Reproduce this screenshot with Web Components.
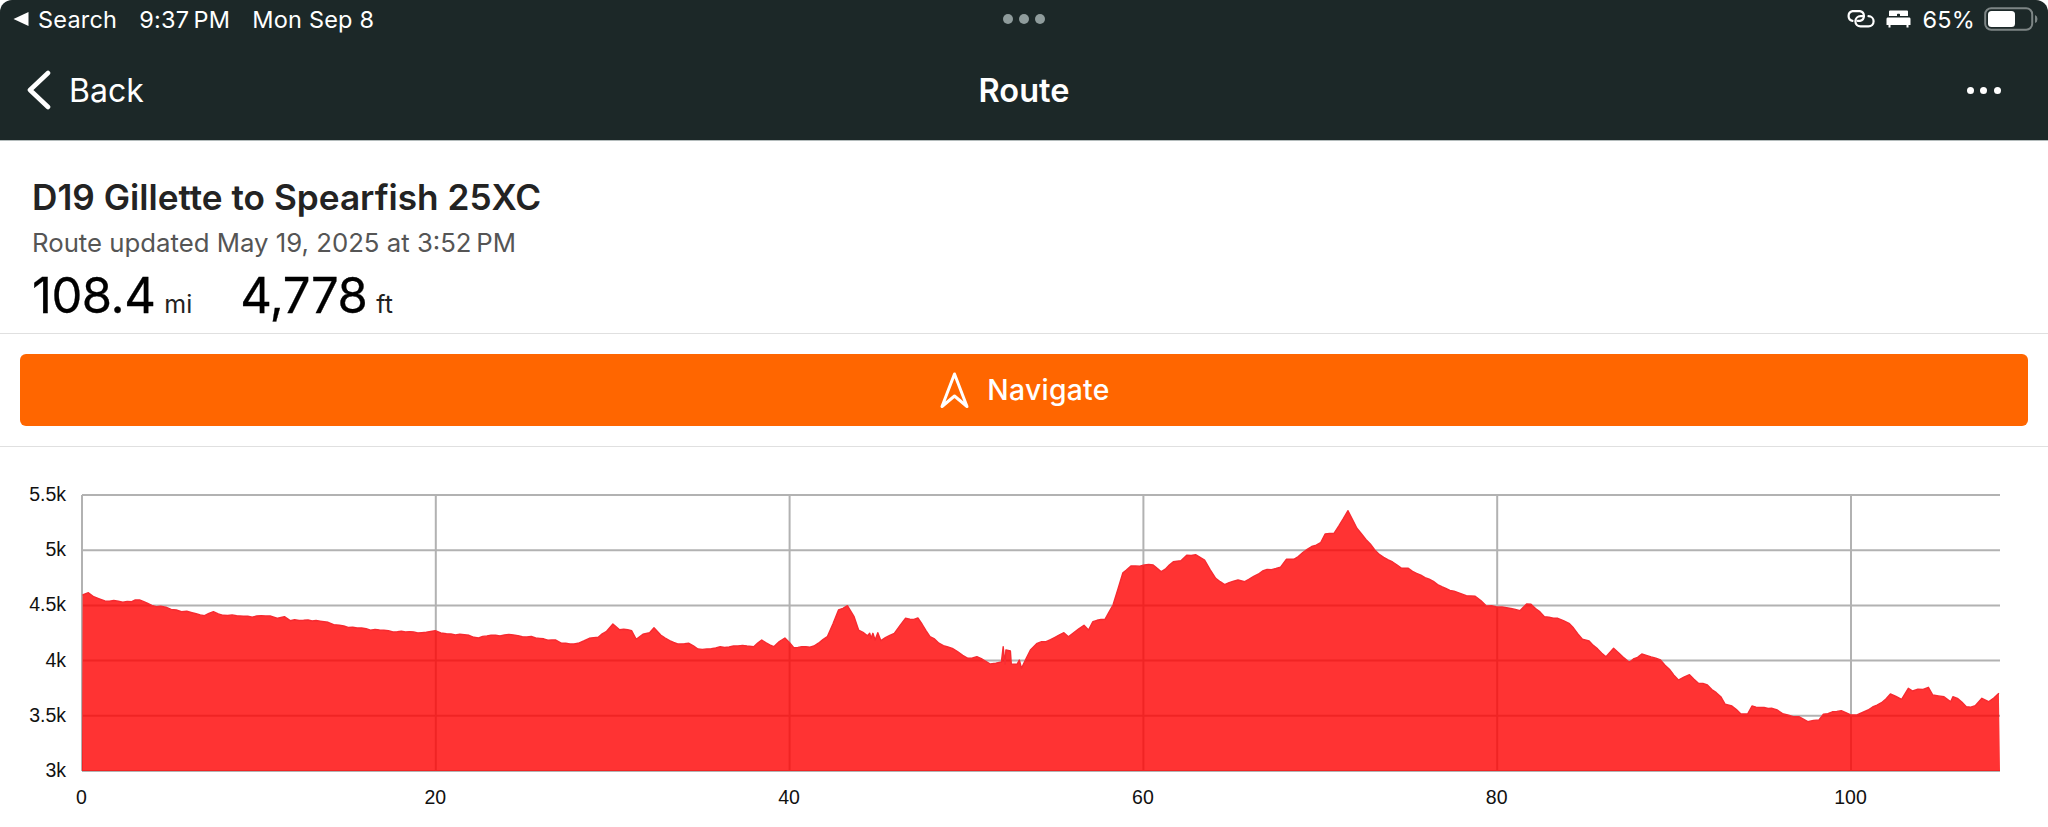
<!DOCTYPE html>
<html>
<head>
<meta charset="utf-8">
<title>Route</title>
<style>
html, body { margin: 0; padding: 0; background: #fff; height: 827px; overflow: hidden; }
body { font-family: Inter, "Noto Sans", sans-serif; }
</style>
</head>
<body>
<route-page></route-page>

<script>
// status bar + nav bar
class TopBar extends HTMLElement {
    constructor(){
        super();
        this.attachShadow({mode:"open"});
        this.shadowRoot.innerHTML = `
<style>
:host { display: block; background: #1c2828; color: #fff; height: 140px; border-bottom: 1px solid #b4bcbc; border-radius: 12px 12px 0 0; }
#status { height: 38px; display: flex; align-items: center; padding: 0 10px 0 13px; font-size: 23.5px; letter-spacing: .2px; position: relative; }
#status .left { display: flex; align-items: center; }
#status .right { margin-left: auto; display: flex; align-items: center; }
#search { margin-left: 9px; margin-right: 22px; }
#time { margin-right: 22px; }
#multi { position: absolute; left: 1003px; top: 14px; display: flex; gap: 6px; }
#multi i { width: 10px; height: 10px; border-radius: 50%; background: #8f9c9c; display: block; }
#pct { margin: 0 9px 0 11px; }
#nav { height: 100px; padding: 2px 47.5px 0 27px; display: flex; align-items: center; position: relative; }
#back { margin-left: 18px; font-size: 32px; }
#title { position: absolute; left: 0; right: 0; text-align: center; font-size: 32.5px; font-weight: 600; }
#more { margin-left: auto; display: flex; gap: 6.3px; }
#more i { width: 7px; height: 7px; border-radius: 50%; background: #fff; display: block; }
svg { display: block; }
</style>
<div id="status">
  <div class="left">
    <svg width="16" height="16" viewBox="0 0 16 16"><path d="M15.5 1 L15.5 15 L.5 8 Z" fill="#fff"/></svg>
    <span id="search">Search</span>
    <span id="time">9:37&#8201;PM</span>
    <span>Mon Sep 8</span>
  </div>
  <div id="multi"><i></i><i></i><i></i></div>
  <div class="right">
    <svg width="28" height="18" viewBox="0 0 28 18" fill="none" stroke="#fff" stroke-width="2.2" stroke-linecap="round">
      <path d="M5.5 10.8 A4.9 4.9 0 0 1 5.5 1.2 H13 A4.9 4.9 0 0 1 13 10.8 H10.5"/>
      <path d="M21.5 6.2 A5.1 5.1 0 0 1 21.5 16.4 H13.5 A5.1 5.1 0 0 1 13.5 6.2 H16.5"/>
    </svg>
    <svg style="margin-left:11px" width="25" height="18" viewBox="0 0 25 18" fill="#fff">
      <path d="M3 1.5 Q3 .5 4 .5 H21 Q22 .5 22 1.5 V6 H14 V4.5 Q14 3.8 13.2 3.8 H11.8 Q11 3.8 11 4.5 V6 H3 Z"/>
      <path d="M1.5 7.5 H23.5 Q24.5 7.5 24.5 9 V15 H22.5 V17.5 H20.5 V15 H4.5 V17.5 H2.5 V15 H.5 V9 Q.5 7.5 1.5 7.5 Z"/>
    </svg>
    <span id="pct">65%</span>
    <svg width="54" height="26" viewBox="0 0 54 26">
      <rect x="1.2" y="2.2" width="47" height="21.6" rx="6" fill="none" stroke="#7d8585" stroke-width="2"/>
      <rect x="4" y="5" width="27" height="16" rx="3.5" fill="#fff"/>
      <path d="M51 9 Q53.5 10 53.5 13 Q53.5 16 51 17 Z" fill="#7d8585"/>
    </svg>
  </div>
</div>
<div id="nav">
  <svg width="24" height="40" viewBox="0 0 24 40" fill="none" stroke="#fff" stroke-width="4.6" stroke-linecap="round" stroke-linejoin="round"><path d="M21 3 L3 20 L21 37"/></svg>
  <span id="back">Back</span>
  <span id="title">Route</span>
  <div id="more"><i></i><i></i><i></i></div>
</div>`;
    }
}

// name, date, distance and climb
class RouteSummary extends HTMLElement {
    constructor(){
        super();
        this.attachShadow({mode:"open"});
        this.shadowRoot.innerHTML = `
<style>
:host { display: block; height: 193px; padding: 0 32px; border-bottom: 1px solid #e0e0e0; box-sizing: border-box; }
h1 { margin: 0; padding-top: 35px; font-size: 35.2px; line-height: 42px; font-weight: 600; color: #232323; }
#updated { font-size: 25.75px; line-height: 30px; margin-top: 10px; color: #555; }
#stats { display: flex; align-items: baseline; margin-top: 10px; line-height: 56px; color: #000; }
b { font-weight: 400; font-size: 49px; letter-spacing: -.5px; -webkit-text-stroke: .3px #000; }
span { font-size: 25px; margin-left: 9px; margin-right: 48px; color: #222; }
</style>
<h1>D19 Gillette to Spearfish 25XC</h1>
<div id="updated">Route updated May 19, 2025 at 3:52&#8201;PM</div>
<div id="stats"><b>108.4</b><span>mi</span><b>4,778</b><span>ft</span></div>`;
    }
}

class NavigateButton extends HTMLElement {
    constructor(){
        super();
        this.attachShadow({mode:"open"});
        this.shadowRoot.innerHTML = `
<style>
:host { display: block; padding: 20px 20px 20px; border-bottom: 1px solid #e0e0e0; }
button { display: flex; align-items: center; justify-content: center; width: 100%; height: 72px; border: none; border-radius: 6px; background: #ff6600; color: #fff; font: 500 28.3px Inter, sans-serif; letter-spacing: .3px; padding: 0; }
svg { margin-right: 18px; margin-left: 2px; }
</style>
<button>
  <svg width="29" height="37" viewBox="0 0 29 37" fill="none" stroke="#fff" stroke-width="3" stroke-linejoin="round" stroke-linecap="round"><path d="M14.5 2 L27 34.5 L14.5 24 L2 34.5 Z"/></svg>
  <slot></slot>
</button>`;
    }
}

// elevation profile, points are traced in page pixels
var LEFT = 82, RIGHT = 2000, TOP = 495, BOTTOM = 771;
function zoomed(dx, list){
    var out = [];
    for (var i = 0; i < list.length; i += 2) out.push([dx + list[i]/2.24, 480 + list[i+1]/3]);
    return out;
}
var trace = [].concat(
    zoomed(0, [185,345,198,338,210,350,235,363,295,365,303,360,322,365,340,376,360,379,395,390,430,398,458,407,478,395,500,406,530,407,545,409,605,408,622,415,637,410,650,422,690,420,735,427,760,436,800,444,850,450,890,455,945,458,975,452,1000,461,1040,464,1072,474,1100,466,1150,465,1200,474,1245,480,1258,490,1295,490,1320,475,1340,472,1358,455,1373,432,1388,449,1415,452,1425,478,1440,463,1455,458,1465,443,1480,465,1500,482,1518,492]),
    zoomed(680, [0,492,20,490,40,507,70,506,120,498,150,498,165,500,183,480,210,500,235,474,255,503,300,498,330,470,355,390,375,377,390,410,400,450,420,467,425,460,428,475,432,460,437,480,443,458,450,482,480,460,505,415,515,418,533,414,560,470,590,497,610,505,645,535,665,530,695,552,720,546,724,500,728,552,730,510,740,513,742,552,755,553,760,540,765,565,785,510,800,490,820,485,860,458,870,470,905,436,915,450,925,425,952,418,970,375,992,278,1000,270,1010,258,1060,255,1078,275,1105,245,1122,242,1135,226,1155,224,1175,240,1200,295,1220,314,1250,300,1265,305,1305,273,1345,262,1358,238,1375,238,1405,208,1435,188,1445,162,1465,160]),
    zoomed(1348, [0,92,20,145,60,210,80,232,110,255,120,265,135,265,210,320,265,347,285,349,310,378,345,381,385,392,400,372,410,373,440,410,470,415,495,430,525,478,540,483,578,530,595,505,630,547,658,522,700,540,740,600,765,584,785,610,805,615,835,650,845,673,860,678,880,702,895,702,905,678,950,685,985,705,1010,710,1030,725,1055,720,1065,703,1105,692,1125,704,1140,705,1165,690,1195,668,1215,642,1240,658,1255,625,1265,633,1300,622,1310,645,1335,650,1350,665,1355,650,1365,655,1385,680,1405,677,1420,655,1435,665,1458,640])
);

// the real profile is ragged, so break long segments up with a little fixed noise
function ragged(points){
    var out = [];
    for (var i = 0; i < points.length - 1; i++){
        var a = points[i], b = points[i+1];
        var n = Math.floor((b[0]-a[0]) / 4);
        out.push(a);
        for (var k = 1; k < n; k++){
            var t = k/n, x = a[0] + (b[0]-a[0])*t, y = a[1] + (b[1]-a[1])*t;
            out.push([x, y + Math.sin(x*1.7)*0.5 + Math.sin(x*0.53)*0.4]);
        }
    }
    out.push(points[points.length-1]);
    return out;
}

class ElevationChart extends HTMLElement {
    constructor(){
        super();
        this.attachShadow({mode:"open"});
    }

    connectedCallback(){
        var hLines = "", vLines = "", labels = "";
        var yNames = ["5.5k","5k","4.5k","4k","3.5k","3k"];
        for (var i = 0; i < 6; i++){
            var y = TOP + i*(BOTTOM-TOP)/5;
            hLines += `<line x1="${LEFT}" x2="${RIGHT}" y1="${y}" y2="${y}"/>`;
            labels += `<text x="66" y="${y+6}" text-anchor="end">${yNames[i]}</text>`;
        }
        for (var j = 0; j < 6; j++){
            var x = LEFT + j*353.8;
            vLines += `<line x1="${x}" x2="${x}" y1="${TOP}" y2="${BOTTOM}"/>`;
            labels += `<text x="${x-0.5}" y="804" text-anchor="middle">${j*20}</text>`;
        }
        var line = ragged(trace).map(p => p[0].toFixed(1)+","+p[1].toFixed(1)).join(" L");
        this.shadowRoot.innerHTML = `
<style>
:host { display: block; height: 380px; }
svg { display: block; }
.grid line { stroke: #b2b2b2; stroke-width: 2; }
text { font: 19.5px "Liberation Sans", Arial, sans-serif; fill: #111; }
</style>
<svg width="2048" height="380" viewBox="0 447 2048 380">
  <g class="grid">${hLines}${vLines}</g>
  <path d="M${LEFT},${BOTTOM} L${line} L${RIGHT},${BOTTOM} Z" fill="rgba(255,0,0,.8)"/>
  <path d="M${line}" fill="none" stroke="#f62a30" stroke-width="1.4" stroke-linejoin="round"/>
  ${labels}
</svg>`;
    }
}

class RoutePage extends HTMLElement {
    constructor(){
        super();
        this.attachShadow({mode:"open"});
        this.shadowRoot.innerHTML = `
<style>
:host { display: block; width: 2048px; height: 827px; overflow: hidden; background: #fff; }
</style>
<top-bar></top-bar>
<route-summary></route-summary>
<navigate-button>Navigate</navigate-button>
<elevation-chart></elevation-chart>`;
    }
}

customElements.define("top-bar", TopBar);
customElements.define("route-summary", RouteSummary);
customElements.define("navigate-button", NavigateButton);
customElements.define("elevation-chart", ElevationChart);
customElements.define("route-page", RoutePage);
</script>
</body>
</html>
